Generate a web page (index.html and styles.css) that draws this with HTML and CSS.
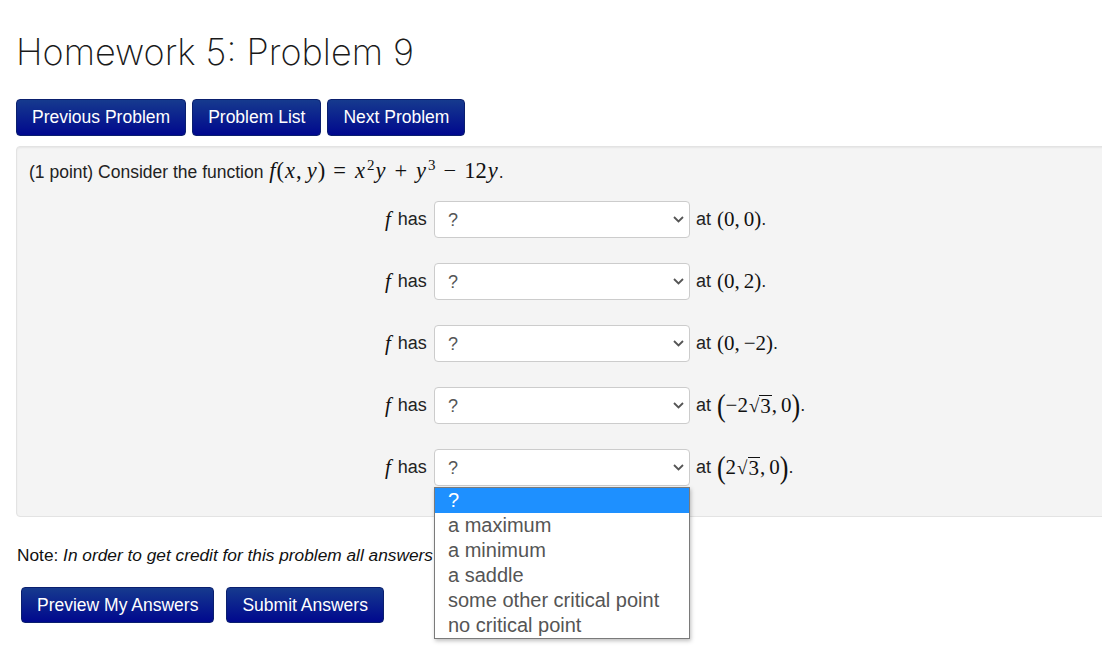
FILE: index.html
```html
<!DOCTYPE html>
<html>
<head>
<meta charset="utf-8">
<link rel="stylesheet" href="styles.css">
</head>
<body>
<div class="page">
  <h1 class="title">Homework 5: Problem 9</h1>
  <div class="nav">
    <a class="btn nav-btn">Previous Problem</a>
    <a class="btn nav-btn">Problem List</a>
    <a class="btn nav-btn">Next Problem</a>
  </div>
  <div class="well">
    <p class="intro">(1 point) Consider the function <span class="math fn"><i>f</i>(<i>x</i>,<span class="sp"></span><i>y</i>)<span class="rel">=</span><i>x</i><sup>2</sup><i>y</i><span class="bin">+</span><i>y</i><sup>3</sup><span class="bin">−</span>12<i>y</i></span>.</p>
    <div class="rows">
      <div class="row">
        <span class="math"><i>f</i></span><span class="has">has</span>
        <div class="select"><span>?</span><svg class="chev" width="11" height="7" viewBox="0 0 11 7"><path d="M1 1l4.5 4.5L10 1" fill="none" stroke="#555" stroke-width="1.8"/></svg></div>
        <span class="at">at</span><span class="math pt">(0,<span class="sp"></span>0)</span>.
      </div>
      <div class="row">
        <span class="math"><i>f</i></span><span class="has">has</span>
        <div class="select"><span>?</span><svg class="chev" width="11" height="7" viewBox="0 0 11 7"><path d="M1 1l4.5 4.5L10 1" fill="none" stroke="#555" stroke-width="1.8"/></svg></div>
        <span class="at">at</span><span class="math pt">(0,<span class="sp"></span>2)</span>.
      </div>
      <div class="row">
        <span class="math"><i>f</i></span><span class="has">has</span>
        <div class="select"><span>?</span><svg class="chev" width="11" height="7" viewBox="0 0 11 7"><path d="M1 1l4.5 4.5L10 1" fill="none" stroke="#555" stroke-width="1.8"/></svg></div>
        <span class="at">at</span><span class="math pt">(0,<span class="sp"></span>−2)</span>.
      </div>
      <div class="row">
        <span class="math"><i>f</i></span><span class="has">has</span>
        <div class="select"><span>?</span><svg class="chev" width="11" height="7" viewBox="0 0 11 7"><path d="M1 1l4.5 4.5L10 1" fill="none" stroke="#555" stroke-width="1.8"/></svg></div>
        <span class="at">at</span><span class="math pt big"><span class="paren">(</span>−2<span class="rad">√</span><span class="radicand">3</span>,<span class="sp"></span>0<span class="paren">)</span></span>.
      </div>
      <div class="row">
        <span class="math"><i>f</i></span><span class="has">has</span>
        <div class="select"><span>?</span><svg class="chev" width="11" height="7" viewBox="0 0 11 7"><path d="M1 1l4.5 4.5L10 1" fill="none" stroke="#555" stroke-width="1.8"/></svg></div>
        <span class="at">at</span><span class="math pt big"><span class="paren">(</span>2<span class="rad">√</span><span class="radicand">3</span>,<span class="sp"></span>0<span class="paren">)</span></span>.
        <ul class="options">
          <li class="sel">?</li>
          <li>a maximum</li>
          <li>a minimum</li>
          <li>a saddle</li>
          <li>some other critical point</li>
          <li>no critical point</li>
        </ul>
      </div>
    </div>
  </div>
  <p class="note">Note: <i>In order to get credit for this problem all answers must be correct.</i></p>
  <div class="submit">
    <a class="btn sub-btn">Preview My Answers</a>
    <a class="btn sub-btn">Submit Answers</a>
  </div>
</div>
</body>
</html>
```
FILE: styles.css
```css
html, body {
  margin: 0;
  padding: 0;
  overflow: hidden;
  background: #fff;
}
body {
  font-family: "Liberation Sans", Arial, sans-serif;
  color: #222;
  width: 1102px;
  height: 646px;
}
.page {
  padding: 0 0 0 16px;
  width: 1140px;
}
.title {
  font-family: "Inter", "Liberation Sans", sans-serif;
  font-weight: 200;
  font-size: 36px;
  line-height: 40px;
  color: #1a1a1a;
  margin: 0;
  padding-top: 32px;
  letter-spacing: 0;
}
.nav {
  display: flex;
  gap: 6px;
  margin-top: 27px;
}
.btn {
  display: inline-flex;
  align-items: center;
  justify-content: center;
  color: #fff;
  background: linear-gradient(to bottom, #163a8e 0%, #00088e 100%);
  border: 1px solid #0a1f6e;
  border-radius: 4px;
  box-sizing: border-box;
  font-size: 17.5px;
  text-decoration: none;
}
.nav-btn {
  height: 37px;
  padding: 0 15px;
}
.well {
  margin-top: 10px;
  width: 1110px;
  box-sizing: border-box;
  background: #f4f4f4;
  border: 1px solid #e3e3e3;
  border-radius: 4px;
  box-shadow: inset 0 1px 2px rgba(0,0,0,0.06);
  padding: 11px 12px 17px;
  height: 371px;
}
.intro {
  margin: 0;
  font-size: 17.5px;
  line-height: 26px;
  color: #222;
}
.math {
  font-family: "Liberation Serif", "Times New Roman", serif;
  font-size: 21px;
  color: #111;
}
.math.fn {
  font-size: 22.5px;
}
.math i {
  margin-right: 1px;
}
.fn i {
  margin: 0 1px;
}
.math sup {
  font-size: 15px;
  vertical-align: 8px;
  line-height: 0;
  margin-left: 1px;
}
.sp {
  display: inline-block;
  width: 4px;
}
.rel {
  margin: 0 8px;
}
.bin {
  margin: 0 8px;
}
.rows {
  margin-top: 16px;
  margin-left: 356px;
  display: flex;
  flex-direction: column;
  gap: 25px;
}
.row {
  display: flex;
  align-items: center;
  height: 37px;
  font-size: 18px;
  color: #222;
  position: relative;
}
.has {
  margin-left: 6px;
}
.select {
  width: 256px;
  height: 37px;
  box-sizing: border-box;
  border: 1px solid #ccc;
  border-radius: 4px;
  background: #fff;
  display: flex;
  align-items: center;
  justify-content: space-between;
  padding: 0 5px 0 13px;
  margin: 0 6px 0 7px;
  color: #555;
  font-size: 18px;
}
.select span {
  padding-top: 2px;
}
.at {
  margin-right: 6px;
}
.row .math.pt {
  display: inline-flex;
  align-items: center;
  font-size: 21px;
}
.paren {
  font-size: 26px;
  line-height: 1;
  transform: scaleY(1.2);
  display: inline-block;
}
.rad {
  font-size: 19px;
  margin-left: 1px;
}
.radicand {
  border-top: 1.3px solid #111;
  line-height: 20px;
  padding: 0 1px;
}
.options {
  position: absolute;
  left: 49px;
  top: 38px;
  width: 256px;
  box-sizing: border-box;
  margin: 0;
  padding: 0;
  list-style: none;
  background: #fff;
  border: 1px solid #7a7a7a;
  box-shadow: 1px 2px 4px rgba(0,0,0,0.25);
  z-index: 5;
}
.options li {
  height: 25px;
  line-height: 25px;
  padding-left: 13px;
  font-size: 20px;
  color: #555;
}
.options li.sel {
  background: #1e90ff;
  color: #fff;
}
.note {
  margin: 28px 0 0 1px;
  font-size: 17.3px;
  line-height: 20px;
  color: #111;
}
.submit {
  display: flex;
  gap: 12px;
  margin: 22px 0 0 5px;
}
.sub-btn {
  height: 36px;
  padding: 0 15px;
}
```
